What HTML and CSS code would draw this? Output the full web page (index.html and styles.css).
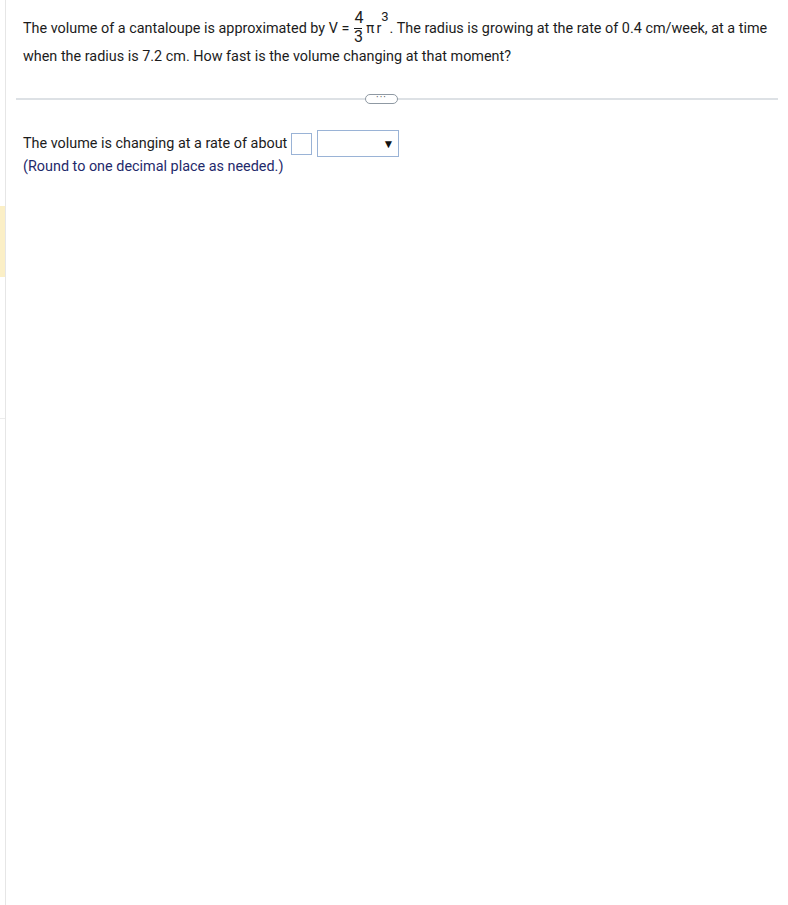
FILE: index.html
```html
<!DOCTYPE html>
<html>
<head>
<meta charset="utf-8">
<link rel="stylesheet" href="styles.css">
</head>
<body>
<div class="page">
  <div class="rail">
    <div class="rail-mark"></div>
    <div class="rail-tick"></div>
  </div>
  <div class="main">
    <div class="question">
      <p class="q-line">The volume of a cantaloupe is approximated by V = <span class="frac"><span class="num">4</span><span class="den">3</span></span><span class="pi">&pi;</span>r<span class="exp">3</span>. The radius is growing at the rate of 0.4 cm/week, at a time</p>
      <p class="q-line2">when the radius is 7.2 cm. How fast is the volume changing at that moment?</p>
    </div>
    <div class="divider">
      <span class="more">&middot;&middot;&middot;</span>
    </div>
    <div class="answer">
      <div class="answer-row">
        <span>The volume is changing at a rate of about</span>
        <span class="box"></span>
        <span class="select"><span class="arrow">&#9660;</span></span>
      </div>
      <div class="hint">(Round to one decimal place as needed.)</div>
    </div>
  </div>
</div>
</body>
</html>
```
FILE: styles.css
```css
html, body {
  margin: 0;
  padding: 0;
  background: #fff;
}
body {
  font-family: Roboto, "Liberation Sans", Arial, sans-serif;
  font-size: 14.4px;
  color: #1c1c1c;
}
.page {
  display: flex;
  min-height: 905px;
}
.rail {
  width: 5px;
  border-right: 1px solid #e6e6e6;
  flex: none;
}
.rail-mark {
  margin-top: 206px;
  height: 71px;
  background: #fbefc6;
}
.rail-tick {
  margin-top: 141px;
  height: 1px;
  background: #ececec;
}
.main {
  flex: 1;
  padding: 0 10px 0 17px;
}
.question {
  padding-top: 14px;
}
.q-line {
  margin: 0;
  line-height: 28px;
  white-space: nowrap;
}
.q-line2 {
  margin: 0;
  line-height: 28px;
}
.frac {
  display: inline-flex;
  flex-direction: column;
  align-items: center;
  vertical-align: 10px;
  margin: -14px 2px -14px 1px;
  font-size: 16px;
}
.num {
  border-bottom: 1px solid #1c1c1c;
  padding: 0 0 2px;
  line-height: 16px;
  width: 8px;
  text-align: center;
}
.den {
  line-height: 16px;
}
.pi {
  margin: 0 2px 0 1px;
  font-size: 14px;
  font-family: "DejaVu Sans", sans-serif;
}
.exp {
  font-size: 13px;
  line-height: 0;
  vertical-align: 12px;
  margin-left: 0;
  margin-right: 1px;
}
.divider {
  margin-top: 27px;
  margin-left: -7px;
  height: 2px;
  background: #dde1e5;
  position: relative;
}
.more {
  position: absolute;
  left: 349px;
  top: -4px;
  width: 31px;
  height: 8px;
  border: 1px solid #8f99a3;
  border-radius: 6px;
  background: #fff;
  font-size: 10px;
  line-height: 6px;
  text-align: center;
  color: #555;
  letter-spacing: 1px;
}
.answer {
  padding-top: 30px;
}
.answer-row {
  display: flex;
  align-items: center;
  height: 27px;
}
.box {
  width: 19px;
  height: 20px;
  border: 1px solid #9ab3d6;
  margin-left: 4px;
  background: #fff;
}
.select {
  width: 80px;
  height: 25px;
  border: 1px solid #9ab3d6;
  margin-left: 5px;
  display: flex;
  justify-content: flex-end;
  align-items: center;
}
.arrow {
  font-size: 12px;
  color: #111;
  margin-right: 4px;
}
.hint {
  color: #1f2a6b;
  line-height: 20px;
  margin-top: 0;
}
```
